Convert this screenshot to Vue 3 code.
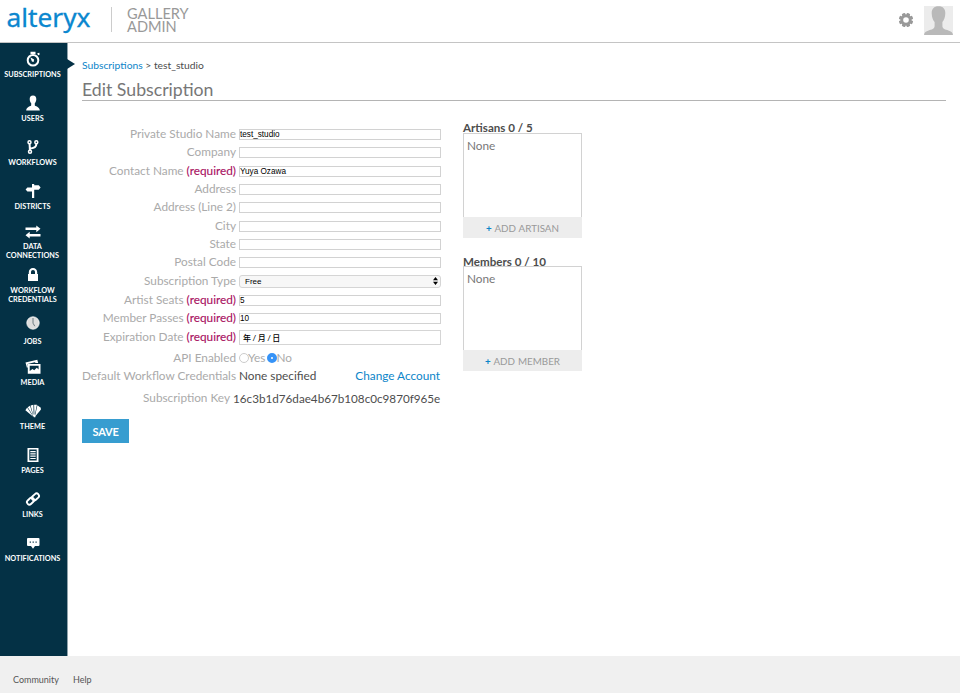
<template>
  <div class="page">
    <header class="header">
      <svg class="logo" width="90" height="40" viewBox="0 0 90 40">
        <text x="6" y="27.3" textLength="84" lengthAdjust="spacingAndGlyphs">alteryx</text>
      </svg>
      <div class="product"><span>GALLERY</span><span>ADMIN</span></div>
      <div class="header-tools">
        <svg class="gear" width="16" height="16" viewBox="0 0 16 16">
          <g fill="#999">
            <rect
              v-for="angle in [0, 45, 90, 135]"
              :key="angle"
              x="6.2"
              y="0.8"
              width="3.6"
              height="14.4"
              rx="1"
              :transform="`rotate(${angle + 22.5} 8 8)`"
            />
            <circle cx="8" cy="8" r="5.5" />
          </g>
          <circle cx="8" cy="8" r="2.8" fill="#fff" />
        </svg>
        <svg class="avatar" width="29" height="29" viewBox="0 0 29 29">
          <rect width="29" height="29" fill="#ececec" />
          <path
            fill="#b9b9b9"
            d="M14.5.3c4.5 0 7 2.7 6.8 7.2-.1 4-1.3 6.7-2.9 8.500v4.200c0 2.500 3 3.300 6 4.200 2.600.8 4.300 1.700 4.600 4.600H0c.3-2.900 2-3.800 4.600-4.600 3-.9 6-1.700 6-4.200V16c-1.600-1.800-2.800-4.500-2.900-8.500C7.500 3 10 .3 14.500.3z"
          />
        </svg>
      </div>
    </header>

    <div class="body">
      <nav class="sidebar">
        <a
          v-for="item in navItems"
          :key="item.icon"
          class="nav-item"
          :class="[item.icon, { active: item.icon === 'subscriptions' }]"
        >
          <svg width="16" height="16" viewBox="0 0 16 16" fill="#fff">
            <template v-if="item.icon === 'subscriptions'">
              <circle cx="8" cy="9.2" r="5.3" fill="none" stroke="#fff" stroke-width="2" />
              <path d="M5.5.8h5v2.200h-5zM12.200 2.200l2.200-.4.200 2-1.500.5zM5.300 6.200l3.800 2.300-.5 2.400-1.700-.5z" />
            </template>
            <path
              v-else-if="item.icon === 'users'"
              d="M8 .5c2.300 0 3.400 1.500 3.300 3.700-.1 1.700-.6 3-1.500 4v2c0 1.200 5 1.200 5 5.300H1.200c0-4.100 5-4.100 5-5.300v-2c-.9-1-1.400-2.300-1.500-4C4.600 2 5.700.5 8 .5z"
            />
            <g v-else-if="item.icon === 'workflows'" fill="none" stroke="#fff" stroke-width="1.5">
              <circle cx="4.5" cy="3.2" r="1.5" />
              <circle cx="11.3" cy="3.2" r="1.5" />
              <circle cx="5" cy="12.8" r="1.5" />
              <path d="M4.6 5l.3 6.200M11.300 5c.2 3-1.800 3.600-6 4.600" stroke-width="2" />
            </g>
            <path
              v-else-if="item.icon === 'districts'"
              d="M7 1h2.200v1.300h4.600L15.600 4.400l-1.800 2.300H9.200V15H7V8.600H2.400L.6 6.600l1.800-2.100H7z"
            />
            <path
              v-else-if="item.icon === 'data'"
              d="M.5 3.600h10.800V1.400l4.200 3.400-4.200 3.400V6H.5zM15.500 10H4.700V7.800L.5 11.200l4.200 3.400V12.400h10.800z"
            />
            <path
              v-else-if="item.icon === 'credentials'"
              fill-rule="evenodd"
              d="M3.800 7V5.200C3.800 2.700 5.600 1 8 1s4.200 1.700 4.200 4.200V7h.8v7H3V7zM6 7h4V5.200C10 3.900 9.200 3 8 3s-2 .9-2 2.200z"
            />
            <template v-else-if="item.icon === 'jobs'">
              <circle cx="8" cy="8" r="6.2" fill="#ddd" stroke="#f6f6f6" stroke-width=".8" />
              <path d="M8 3v5.200l1.800 3" fill="none" stroke="#6d7a80" stroke-width="1" />
            </template>
            <template v-else-if="item.icon === 'media'">
              <path d="M.5 3.600L12.300.8l.9 3.200H10.600L9.800 3.200 2.600 4.900l.3 3-.9 1z" />
              <path fill-rule="evenodd" d="M2.800 5h12.700v9.800H2.800zM4.700 6.700v5.300l2.800-2 1.700 1.200 2.600-2.400 1.800 1.800V6.700z" />
            </template>
            <g v-else-if="item.icon === 'theme'">
              <path d="M.4 7.200L2.200 4.500l6 9.300z" />
              <path d="M2.700 4.200L5 2.700l3.500 10.800z" />
              <path d="M5.600 2.500L8.400 1.800l.3 11.800z" />
              <path d="M9.100 1.800h2.800L9.500 13.500z" />
              <path d="M12.400 2.200l3.400 2.600v2L9.900 13.800z" />
              <path d="M7.400 11.500h3v2.700h-1.500z" />
            </g>
            <path
              v-else-if="item.icon === 'pages'"
              fill-rule="evenodd"
              d="M2.500 1h11v14h-11zM4.300 2.600v10.800h7.400V2.600zM5.300 4h5.400v1.200H5.300zM5.300 6.300h5.400v1.200H5.300zM5.300 8.600h5.400v1.200H5.300zM5.300 10.900h5.400v1.200H5.300z"
            />
            <g v-else-if="item.icon === 'links'" fill="none" stroke="#fff" stroke-width="1.900">
              <rect x="6.6" y="3.500" width="7.800" height="4.800" rx="2.300" transform="rotate(-43 10.500 6)" />
              <rect x="1.600" y="7.700" width="7.800" height="4.800" rx="2.300" transform="rotate(-43 5.500 10.100)" />
            </g>
            <template v-else>
              <path d="M3 3h10.500q1 0 1 1v6q0 1-1 1H10l-2 2.800L6 11H3q-1 0-1-1V4q0-1 1-1z" />
              <path fill="#043145" d="M4.700 6.500h1.200v1.200H4.700zM7.600 6.500h1.200v1.200H7.600zM10.500 6.500h1.200v1.200h-1.200z" />
            </template>
          </svg>
          <span>{{ item.label }}</span>
        </a>
      </nav>

      <main class="content">
        <div class="breadcrumb"><a>Subscriptions</a> &gt; test_studio</div>
        <h1>Edit Subscription</h1>

        <div class="columns">
          <form class="form" @submit.prevent>
            <div v-for="field in fields" :key="field.label" class="row" :class="field.type">
              <label>
                {{ field.label }}
                <span v-if="field.required" class="required">(required)</span>
              </label>
              <div v-if="field.type === 'select'" class="select">
                <span>{{ field.value }}</span>
                <svg width="5" height="8" viewBox="0 0 5 8">
                  <path d="M0 3.200L2.500 0 5 3.200zM0 4.800h5L2.500 8z" />
                </svg>
              </div>
              <div v-else-if="field.type === 'date'" class="date">
                <span>年</span><span>/</span><span>月</span><span>/</span><span>日</span>
              </div>
              <div v-else-if="field.type === 'radio'" class="radios">
                <i class="radio" @click="apiEnabled = true" :class="{ checked: apiEnabled }"></i>Yes
                <i class="radio" @click="apiEnabled = false" :class="{ checked: !apiEnabled }"></i>No
              </div>
              <div v-else-if="field.type === 'account'" class="account">
                <span>None specified</span><a>Change Account</a>
              </div>
              <div v-else-if="field.type === 'key'" class="key-value">{{ field.value }}</div>
              <input v-else v-model="field.value" type="text" spellcheck="false" />
            </div>
            <button class="save">SAVE</button>
          </form>

          <div class="seats">
            <section v-for="group in groups" :key="group.title" class="group">
              <h2>{{ group.title }}</h2>
              <div class="list">None</div>
              <a class="add"><b>+</b> {{ group.action }}</a>
            </section>
          </div>
        </div>
      </main>
    </div>

    <footer class="footer"><a>Community</a><a>Help</a></footer>
  </div>
</template>

<script setup>
import { ref } from "vue";

const navItems = [
  { icon: "subscriptions", label: "SUBSCRIPTIONS" },
  { icon: "users", label: "USERS" },
  { icon: "workflows", label: "WORKFLOWS" },
  { icon: "districts", label: "DISTRICTS" },
  { icon: "data", label: "DATA CONNECTIONS" },
  { icon: "credentials", label: "WORKFLOW CREDENTIALS" },
  { icon: "jobs", label: "JOBS" },
  { icon: "media", label: "MEDIA" },
  { icon: "theme", label: "THEME" },
  { icon: "pages", label: "PAGES" },
  { icon: "links", label: "LINKS" },
  { icon: "notifications", label: "NOTIFICATIONS" },
];

const apiEnabled = ref(false);

const fields = ref([
  { label: "Private Studio Name", value: "test_studio" },
  { label: "Company", value: "" },
  { label: "Contact Name", value: "Yuya Ozawa", required: true },
  { label: "Address", value: "" },
  { label: "Address (Line 2)", value: "" },
  { label: "City", value: "" },
  { label: "State", value: "" },
  { label: "Postal Code", value: "" },
  { label: "Subscription Type", value: "Free", type: "select" },
  { label: "Artist Seats", value: "5", required: true },
  { label: "Member Passes", value: "10", required: true },
  { label: "Expiration Date", type: "date", required: true },
  { label: "API Enabled", type: "radio" },
  { label: "Default Workflow Credentials", type: "account" },
  { label: "Subscription Key", value: "16c3b1d76dae4b67b108c0c9870f965e", type: "key" },
]);

const groups = [
  { title: "Artisans 0 / 5", action: "ADD ARTISAN" },
  { title: "Members 0 / 10", action: "ADD MEMBER" },
];
</script>

<style>
body {
  margin: 0;
  background: #fff;
}
</style>

<style scoped>
.page {
  display: flex;
  flex-direction: column;
  height: 693px;
  overflow: hidden;
  font-family: Lato, "Noto Sans CJK JP", sans-serif;
  font-size: 11.8px;
  color: #4d4d4d;
}
a {
  color: #0b85c9;
  cursor: pointer;
}

/* Header */
.header {
  display: flex;
  box-sizing: border-box;
  height: 43px;
  flex: none;
  border-bottom: 1px solid #c4c4c4;
}
.logo {
  width: 91px;
  overflow: visible;
}
.logo text {
  font-family: "Noto Sans", sans-serif;
  font-size: 26px;
  font-weight: 400;
  fill: #0b87cf;
  stroke: #0b87cf;
  stroke-width: 0.3px;
}
.product {
  display: flex;
  flex-direction: column;
  height: 25px;
  margin: 7px 0 0 20px;
  padding-left: 15px;
  border-left: 1px solid #ccc;
  font-size: 14.6px;
  line-height: 13px;
  color: #999;
}
.header-tools {
  display: flex;
  align-items: flex-start;
  margin-left: auto;
  padding: 6px 7px 0 0;
}
.gear {
  margin: 6px 10px 0 0;
}

/* Sidebar */
.body {
  display: flex;
  height: 613px;
  flex: none;
}
.sidebar {
  box-sizing: border-box;
  width: 68px;
  flex: none;
  border-right: 1px solid #8fa2ab;
  background: #043145;
}
.nav-item {
  position: relative;
  display: flex;
  flex-direction: column;
  align-items: center;
  box-sizing: border-box;
  height: 44px;
  padding: 8px 2px 0 0;
  font-size: 7.3px;
  font-weight: 700;
  line-height: 9px;
  text-align: center;
  color: #fff;
}
.nav-item svg {
  flex: none;
  margin-bottom: 3px;
}
.nav-item.data {
  padding-top: 5px;
}
.nav-item.data svg {
  margin-bottom: 2px;
}
.nav-item.credentials {
  padding-top: 4px;
}
.nav-item.jobs svg {
  margin-bottom: 6px;
}
.nav-item.active::after {
  content: "";
  position: absolute;
  left: 67px;
  top: 16px;
  border: solid transparent;
  border-width: 5.5px 0 5.5px 8px;
  border-left-color: #043145;
}

/* Content */
.content {
  flex: 1;
  padding: 14px 14px 0;
}
.breadcrumb {
  font-size: 10.3px;
  line-height: 16px;
}
h1 {
  margin: 6px 0 0;
  border-bottom: 1px solid #b4b4b4;
  font-size: 17.7px;
  font-weight: 400;
  line-height: 21px;
  color: #777;
}
.columns {
  display: flex;
  gap: 22px;
  padding-top: 24px;
}
.form {
  width: 359px;
}
.row {
  display: flex;
  align-items: center;
  justify-content: space-between;
  height: 18.3px;
  white-space: nowrap;
}
.row label {
  width: 154px;
  display: flex;
  justify-content: flex-end;
  gap: 3px;
  line-height: 16px;
  color: #aaa;
}
.required {
  color: #a80e60;
  -webkit-text-stroke: 0.1px #a80e60;
}
.row > :last-child {
  box-sizing: border-box;
  width: 202px;
}
.row input {
  height: 11px;
  margin: 1px 0 0;
  padding: 0;
  border: 1px solid #d2d2d2;
  font-family: "Liberation Sans", sans-serif;
  font-size: 8.2px;
  line-height: 9px;
  color: #000;
  outline: none;
}
.row.select {
  height: 19.2px;
}
.row.date,
.row.radio {
  height: 20px;
}
.row.radio label {
  padding-top: 1px;
}
.row.key {
  height: 18px;
  margin-top: 4px;
}
div.select:last-child {
  display: flex;
  align-items: center;
  justify-content: space-between;
  height: 13px;
  margin-top: 1px;
  padding: 0 2px 0 5px;
  border: 1px solid #d5d5d5;
  border-radius: 3px;
  background: #f7f7f7;
  font-family: "Liberation Sans", sans-serif;
  font-size: 8px;
  color: #000;
}
div.date:last-child {
  display: flex;
  align-items: center;
  gap: 1.5px;
  height: 15px;
  margin-top: 1px;
  padding-left: 3px;
  border: 1px solid #d5d5d5;
  font-size: 8px;
  font-weight: 500;
  color: #000;
}
.radios {
  display: flex;
  align-items: center;
  color: #aaa;
}
.radio:not(.row) {
  box-sizing: border-box;
  width: 10px;
  height: 10px;
  margin: 2px -1px 0 0;
  border: 1px solid #ccc;
  border-radius: 50%;
  background: #fff;
}
.radio:not(.row) + .radio {
  margin-left: 2px;
}
.radio.checked:not(.row) {
  border: 4px solid #3693f7;
}
.account {
  display: flex;
  justify-content: space-between;
  line-height: 16px;
}
.account a {
  margin-right: 1px;
}
.row.account {
  height: 18px;
}
.row > .account {
  margin-top: -1px;
}
.row.key label {
  width: 148px;
}
.row.key .key-value {
  width: 208px;
  font-size: 11.7px;
}
.save {
  display: block;
  width: 47px;
  height: 24px;
  margin-top: 12px;
  padding: 0;
  border: 0;
  background: #379dd0;
  font: 700 11px Lato, sans-serif;
  letter-spacing: -0.2px;
  color: #fff;
}

/* Seat lists */
.group {
  width: 119px;
}
.group + .group {
  margin-top: 21px;
}
h2 {
  height: 6px;
  margin: 0;
  padding-top: 2px;
  font-size: 11.6px;
  font-weight: 700;
  line-height: 1px;
}
.list {
  box-sizing: border-box;
  height: 84px;
  padding: 3px;
  border: 1px solid #d2d2d2;
  border-bottom: 0;
  line-height: 17px;
  color: #777;
}
.add {
  display: block;
  height: 21px;
  background: #ededed;
  font-size: 9.8px;
  line-height: 22px;
  text-align: center;
  word-spacing: 0.5px;
  color: #999;
}
.add b {
  color: #0b85c9;
}
.group + .group h2 {
  height: 5px;
}

/* Footer */
.footer {
  display: flex;
  gap: 14px;
  flex: 1;
  padding: 17px 13px 0;
  background: #f0f0f0;
  font-size: 9px;
  line-height: 14px;
}
.footer a {
  color: #555;
}
</style>
